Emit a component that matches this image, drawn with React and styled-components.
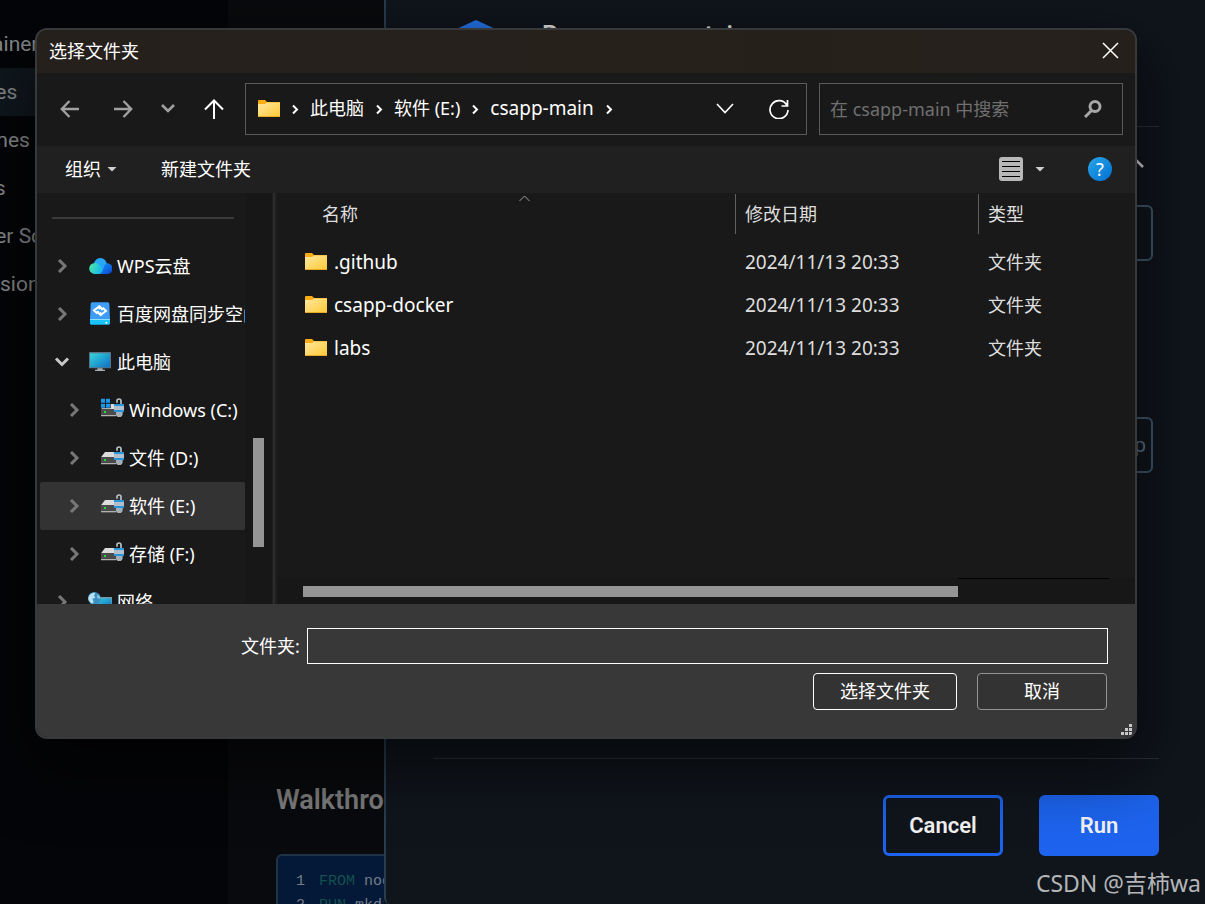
import React from 'react';
import styled, { createGlobalStyle, css } from 'styled-components';

const GlobalStyle = createGlobalStyle`
    *{
        box-sizing: border-box;
    }
    body{
        margin: 0;
        background-color: #0f141b;
        color: #fff;
        font-family: "Noto Sans", "Noto Sans CJK SC", sans-serif;
        font-size: 18px;
        line-height: 24px;
    }
    button, input{
        font: inherit;
        color: inherit;
    }
    button{
        padding: 0;
        border: 0;
        background: none;
        cursor: pointer;
    }
    svg{
        display: block;
        flex-shrink: 0;
    }
`;

/* ---------- page behind the dialog ---------- */
const Page = styled.div`
    position: relative;
    display: flex;
    height: 100vh;
    overflow: hidden;
    font-family: Roboto, "Noto Sans CJK SC", sans-serif;
`;

const Sidebar = styled.nav`
    width: 228px;
    flex-shrink: 0;
    padding-top: 20px;
    background-color: #040508;
`;

const SideLink = styled.a`
    display: flex;
    align-items: center;
    height: 48px;
    color: #8a8d90;
    font-size: 21px;
    text-decoration: none;
    background-color: ${props => (props.$active ? '#10181e' : 'transparent')};
    span{
        margin-left: -52px;
        white-space: nowrap;
    }
`;

const Main = styled.main`
    width: 156px;
    flex-shrink: 0;
    display: flex;
    flex-direction: column;
    overflow: hidden;
    white-space: nowrap;
    background-color: #090a0d;
    padding: 780px 0 0 48px;
    h2{
        margin: 0 0 34px;
        color: #7c7c7c;
        font-size: 27px;
        line-height: 40px;
        font-weight: 600;
    }
`;

const CodeBlock = styled.pre`
    width: 400px;
    margin: 0;
    padding: 14px 18px;
    border: 2px solid #1e3344;
    border-radius: 6px;
    background-color: #041838;
    color: #757e89;
    font-family: "Liberation Mono", monospace;
    font-size: 15px;
    line-height: 24px;
    i{
        margin-right: 14px;
        font-style: normal;
    }
    b{
        font-weight: 400;
        color: #14524d;
    }
`;

const Drawer = styled.section`
    flex: 1;
    display: flex;
    flex-direction: column;
    border-left: 2px solid #283d50;
    border-bottom-left-radius: 6px;
    background-color: #10151c;
    padding: 0 46px 0 47px;
`;

const DrawerHead = styled.header`
    display: flex;
    align-items: flex-start;
    height: 127px;
    padding: 20px 19px 0;
    border-bottom: 1px solid #2c3136;
    h1{
        margin: 0 0 0 42px;
        color: #e0e0e0;
        font-size: 25px;
        line-height: 32px;
        font-weight: 500;
    }
`;

const DrawerBody = styled.div`
    flex: 1;
    display: flex;
    flex-direction: column;
    padding-right: 6px;
    svg{
        align-self: flex-end;
        margin: 27px 8px 31px 0;
    }
    input{
        width: 100%;
        height: 56px;
        padding: 0 5px;
        border: 2px solid #3f586e;
        border-radius: 6px;
        background: none;
        color: #587690;
        font-size: 21px;
        text-align: right;
    }
    input + input{
        margin-top: 156px;
    }
`;

const DrawerFoot = styled.footer`
    display: flex;
    justify-content: flex-end;
    gap: 36px;
    padding: 36px 0 48px;
    border-top: 1px solid #2c3136;
`;

const BigButton = styled.button`
    width: 120px;
    height: 61px;
    border: 3px solid #1d63ed;
    border-radius: 6px;
    background-color: ${props => (props.$primary ? '#1d63ed' : 'transparent')};
    color: #f2f2f2;
    font-size: 22px;
    font-weight: 600;
`;

const Watermark = styled.div`
    position: absolute;
    right: 4px;
    bottom: 5px;
    z-index: 3;
    color: #b4b6b8;
    font-family: "Noto Sans", "Noto Sans CJK SC", sans-serif;
    font-size: 23px;
    line-height: 32px;
`;

/* ---------- folder dialog ---------- */
const Overlay = styled.div`
    position: absolute;
    inset: 0;
    z-index: 2;
    padding: 28px 68px 0 35px;
    font-family: "Noto Sans", "Noto Sans CJK SC", sans-serif;
    pointer-events: none;
`;

const Dialog = styled.div`
    display: flex;
    flex-direction: column;
    overflow: hidden;
    border: 2px solid #38393b;
    border-radius: 12px;
    background-color: #191919;
    box-shadow: 0 24px 64px 8px rgba(0, 0, 0, 0.55);
    pointer-events: auto;
`;

const TitleBar = styled.div`
    display: flex;
    align-items: center;
    justify-content: space-between;
    height: 43px;
    padding: 0 16px 2px 12px;
    background: linear-gradient(90deg, #26201c, #25211a 70%, #26201c);
`;

const NavBar = styled.div`
    display: flex;
    align-items: center;
    height: 73px;
    padding: 0 12px 2px 6px;
`;

const NavButton = styled.button`
    display: flex;
    align-items: center;
    justify-content: center;
    width: ${props => props.$width || 53}px;
    height: 40px;
    flex-shrink: 0;
    color: ${props => (props.$bright ? '#fff' : '#a0a0a0')};
`;

const boxed = css`
    display: flex;
    align-items: center;
    min-width: 0;
    height: 52px;
    border: 1px solid #5a5a5a;
`;

const AddressBar = styled.div`
    ${boxed}
    flex: 1;
    margin: 0 12px 0 4px;
    padding: 0 7px 0 12px;
    white-space: nowrap;
`;

const Crumb = styled.button`
    padding-bottom: 2px;
    font-size: ${props => (props.$latin ? 19 : 18)}px;
`;

const Spacer = styled.div`
    flex: ${props => (props.$width ? `0 0 ${props.$width}px` : '1')};
`;

const SearchBox = styled.label`
    ${boxed}
    flex: 0 1 304px;
    padding: 0 20px 0 10px;
    input{
        flex: 1;
        min-width: 0;
        padding: 0;
        border: 0;
        outline: 0;
        background: none;
    }
    input::placeholder{
        color: #707070;
        opacity: 1;
    }
`;

const Toolbar = styled.div`
    display: flex;
    align-items: center;
    height: 47px;
    padding: 0 23px 2px 28px;
    background-color: #202020;
`;

const ToolButton = styled.button`
    display: flex;
    align-items: center;
    gap: ${props => props.$gap || 6}px;
    margin-right: ${props => props.$after || 0}px;
`;

const HelpButton = styled.button`
    width: 24px;
    height: 24px;
    border-radius: 50%;
    background: linear-gradient(135deg, #29a5e8, #0070d0);
`;

const Body = styled.div`
    display: flex;
    height: 411px;
`;

const Tree = styled.div`
    width: 208px;
    flex-shrink: 0;
    overflow: hidden;
    padding-left: 3px;
    hr{
        height: 2px;
        margin: 24px 11px 23px 12px;
        border: 0;
        background-color: #3a3a3a;
    }
`;

const TreeRow = styled.div`
    display: flex;
    align-items: center;
    height: 48px;
    padding-left: ${props => (props.$nested ? 26 : 14)}px;
    border-radius: 2px;
    white-space: nowrap;
    overflow: hidden;
    background-color: ${props => (props.$selected ? '#333' : 'transparent')};
    .toggle{
        width: 16px;
        margin-right: 18px;
        color: ${props => (props.$open ? '#c8c8c8' : '#777')};
    }
    .icon{
        display: flex;
        justify-content: center;
        width: 24px;
        margin-right: 5px;
        padding-bottom: ${props => (props.$nested ? 5 : 1)}px;
        flex-shrink: 0;
    }
`;

const TreeScroll = styled.div`
    width: 27px;
    flex-shrink: 0;
    padding: 245px 8px 0;
    background-color: #171717;
    div{
        height: 109px;
        background-color: #959595;
    }
`;

const Splitter = styled.div`
    width: 5px;
    flex-shrink: 0;
    border: solid #1f1f1f;
    border-width: 0 2px 0 1px;
    background-color: #2c2c2c;
`;

const Files = styled.div`
    position: relative;
    flex: 1;
    display: flex;
    flex-direction: column;
    justify-content: space-between;
`;

const SortMark = styled.svg`
    position: absolute;
    top: 2px;
    left: 242px;
`;

const FileTable = styled.table`
    width: 100%;
    table-layout: fixed;
    border-collapse: collapse;
    th, td{
        padding: 0;
        text-align: left;
        font-weight: 400;
        color: #dedede;
    }
    th{
        height: 47px;
        vertical-align: top;
        padding-top: 1px;
    }
    th div{
        height: 40px;
        padding-left: 9px;
        border-left: 1px solid #606060;
        line-height: 40px;
    }
    th:first-child div{
        padding-left: 44px;
        border-left-color: transparent;
    }
    td{
        height: 43px;
        padding-left: 10px;
    }
    .date{
        font-size: 19px;
    }
    td:first-child{
        padding-left: 28px;
    }
`;

const FileName = styled.div`
    display: flex;
    align-items: center;
    gap: 7px;
    color: #fff;
    font-size: 19px;
`;

const ListScroll = styled.div`
    display: flex;
    height: 26px;
    padding: 0 26px;
    background-color: #171717;
    .thumb{
        flex: 655;
        height: 11px;
        margin-top: 8px;
        background-color: #959595;
    }
    .track{
        flex: 151;
        border-top: 1px solid #000;
    }
`;

const Footer = styled.div`
    position: relative;
    display: flex;
    flex-direction: column;
    gap: 9px;
    padding: 24px 27px 27px 204px;
    background-color: #383838;
`;

const FolderField = styled.label`
    display: flex;
    align-items: center;
    gap: 7px;
    white-space: nowrap;
    input{
        flex: 1;
        min-width: 0;
        height: 36px;
        padding: 0 8px;
        border: 1px solid #fff;
        outline: 0;
        background: none;
    }
`;

const Actions = styled.div`
    display: flex;
    justify-content: flex-end;
    gap: 20px;
    padding-right: 1px;
`;

const ActionButton = styled.button`
    width: ${props => (props.$main ? 144 : 130)}px;
    height: 37px;
    padding-bottom: 2px;
    border: 1px solid ${props => (props.$main ? '#fff' : '#959595')};
    border-radius: 4px;
    background-color: #333;
`;

const Grip = styled.svg`
    position: absolute;
    right: 3px;
    bottom: 2px;
`;

/* ---------- icons ---------- */
const Stroke = ({ w, h, d, sw = 2, ...rest }) => (
    <svg width={w} height={h} viewBox={`0 0 ${w} ${h}`} fill="none" stroke="currentColor" strokeWidth={sw} {...rest}>
        <path d={d} />
    </svg>
);

const CrumbArrow = () => <Stroke w={30} h={12} sw={2} d="M13 2.500l4 4-4 4" />;

const Caret = () => (
    <svg width="10" height="6" viewBox="0 0 10 6">
        <path d="M0.500 1h9L5 5.500z" fill="#d0d0d0" />
    </svg>
);

const FolderIcon = () => (
    <svg width="22" height="17" viewBox="0 0 22 17">
        <defs>
            <linearGradient id="folder" x1="0" y1="0" x2="1" y2="1">
                <stop offset="0" stopColor="#ffe8a0" />
                <stop offset="1" stopColor="#ffc934" />
            </linearGradient>
        </defs>
        <path d="M0 1a1 1 0 011-1h6l2 2h13v5H0z" fill="#f9ad13" />
        <path d="M0 4h7l2-1.500h13V16a1 1 0 01-1 1H1a1 1 0 01-1-1z" fill="url(#folder)" />
        <path d="M0 16h22a1 1 0 01-1 1H1a1 1 0 01-1-1z" fill="#e9ab25" />
    </svg>
);

const CloudIcon = () => (
    <svg width="23" height="16" viewBox="0 0 69 49">
        <defs>
            <linearGradient id="cloudLeft" x1="0" y1="0.300" x2="1" y2="0.700">
                <stop offset="0" stopColor="#4be8a4" />
                <stop offset="1" stopColor="#12b4f6" />
            </linearGradient>
            <linearGradient id="cloudRight" x1="0" y1="0" x2="1" y2="1">
                <stop offset="0" stopColor="#1a9bfa" />
                <stop offset="1" stopColor="#0843cf" />
            </linearGradient>
        </defs>
        <circle cx="34" cy="20" r="20" fill="#27a8fb" />
        <path d="M30 49c16-2 10-33 26-33a16 16 0 01-2 33z" fill="url(#cloudRight)" />
        <path d="M17 49a17 17 0 110-34c12 0 15 8 23 17 3 10-4 17-12 17z" fill="url(#cloudLeft)" />
    </svg>
);

const SyncDiskIcon = () => (
    <svg width="20" height="23" viewBox="0 0 60 69">
        <path d="M7 1h46q5 0 5 5l2 48H0L2 6q0-5 5-5z" fill="#3d9df8" />
        <path d="M0 51h60v13q0 4-4 4H4q-4 0-4-4z" fill="#18c4fb" />
        <path d="M0 51h60v3H0z" fill="#8be0ff" />
        <circle cx="49" cy="62" r="3" fill="#fff" />
        <g fill="none" stroke="#fff" strokeWidth="6">
            <path d="M26 28l-6 5-8-8 16-12 10 9M23 13l8 8" />
            <path d="M34 24l6-5 8 8-16 12-10-9M37 39l-8-8" />
        </g>
    </svg>
);

const ComputerIcon = () => (
    <svg width="22" height="19" viewBox="0 0 66 57">
        <defs>
            <linearGradient id="screen" x1="0" y1="0" x2="1" y2="1">
                <stop offset="0" stopColor="#35d5dc" />
                <stop offset="1" stopColor="#0f6fc4" />
            </linearGradient>
        </defs>
        <rect width="66" height="49" rx="2" fill="#5d7180" />
        <rect x="3" y="4" width="60" height="42" fill="url(#screen)" />
        <path d="M25 49h16v4h7v4H18v-4h7z" fill="#a9adb0" />
    </svg>
);

const DriveIcon = ({ windows }) => (
    <svg width="23" height="19" viewBox="0 0 69 57">
        <path d="M0 34l12-16h34v16z" fill="#dcdcdc" />
        <path d="M0 33h48v20H0z" fill="#4b4b4b" />
        <path d="M0 51h46v4H0z" fill="#b0b0b0" />
        <rect x="9" y="39" width="6" height="6" fill="#26e02a" />
        {windows && (
            <>
                <path d="M0 0h29v31H0z" fill="#191919" />
                <path d="M0 2h12v12H0zM15 2h12v12H15zM0 17h12v12H0zM15 17h12v12H15z" fill="#1a97e6" />
            </>
        )}
        <path d="M48 14V9q0-6 6-6t6 6v10" fill="none" stroke="#b9c2c9" strokeWidth="5" />
        <path d="M45 40h20v10l-5 7H50l-5-7z" fill="#a4afb8" />
        <rect x="39" y="18" width="30" height="24" fill="#2795dd" />
        <rect x="39" y="24" width="30" height="12" fill="#b3bfca" />
    </svg>
);

const NetworkIcon = () => (
    <svg width="24" height="20" viewBox="0 0 72 60">
        <path d="M8 15h64v36H8z" fill="#7f98a5" />
        <path d="M10 19h60v30H10z" fill="url(#screen)" />
        <path d="M30 51h20v7H30z" fill="#a9adb0" />
        <circle cx="19" cy="19" r="19" fill="#3d8fc0" />
        <path d="M4 10Q12 0 22 3l-4 8 4 6-9 3 4 9-4 6Q0 28 1 18z" fill="#b9e2f2" />
        <path d="M27 8l8 4 1 9-8-3z" fill="#8ecbe6" />
    </svg>
);

const HexLogo = () => (
    <svg width="48" height="54" viewBox="0 0 48 54" overflow="visible">
        <path d="M24 0l26 12v29L24 54-2 41V12z" fill="#2272e6" />
    </svg>
);

/* ---------- data ---------- */
const sideLinks = ['Containers', 'Images', 'Volumes', 'Builds', 'Docker Scout', 'Extensions'];

const treeItems = [
    { label: 'WPS云盘', icon: <CloudIcon /> },
    { label: '百度网盘同步空间', icon: <SyncDiskIcon /> },
    { label: '此电脑', icon: <ComputerIcon />, open: true },
    { label: 'Windows (C:)', icon: <DriveIcon windows />, nested: true },
    { label: '文件 (D:)', icon: <DriveIcon />, nested: true },
    { label: '软件 (E:)', icon: <DriveIcon />, nested: true, selected: true },
    { label: '存储 (F:)', icon: <DriveIcon />, nested: true },
    { label: '网络', icon: <NetworkIcon /> },
];

const files = ['.github', 'csapp-docker', 'labs'];

const FolderDialog = () => {
    return (
        <Dialog role="dialog" aria-label="选择文件夹">
            <TitleBar>
                <span>选择文件夹</span>
                <button aria-label="关闭">
                    <Stroke w={17} h={17} sw={1.5} d="M1 1l15 15M16 1L1 16" />
                </button>
            </TitleBar>
            <NavBar>
                <NavButton aria-label="后退">
                    <Stroke w={20} h={18} sw={2.4} d="M19 9H2M9.500 1L1.800 9l7.700 8" />
                </NavButton>
                <NavButton aria-label="前进">
                    <Stroke w={20} h={18} sw={2.4} d="M1 9h17M10.500 1l7.700 8-7.700 8" />
                </NavButton>
                <NavButton $width={38} aria-label="最近位置">
                    <Stroke w={14} h={9} sw={2.6} d="M1 1l6 6 6-6" />
                </NavButton>
                <NavButton $width={54} $bright aria-label="向上">
                    <Stroke w={20} h={20} d="M10 20V2M1 10.500l9-9 9 9" />
                </NavButton>
                <AddressBar>
                    <FolderIcon />
                    <CrumbArrow />
                    <Crumb>此电脑</Crumb>
                    <CrumbArrow />
                    <Crumb>软件 (E:)</Crumb>
                    <CrumbArrow />
                    <Crumb $latin>csapp-main</Crumb>
                    <CrumbArrow />
                    <Spacer />
                    <NavButton $width={40} $bright aria-label="展开">
                        <Stroke w={18} h={11} sw={1.6} d="M1 1l8 8.500L17 1" />
                    </NavButton>
                    <Spacer $width={14} />
                    <NavButton $width={40} $bright aria-label="刷新">
                        <Stroke w={20} h={20} sw={1.7} d="M18 6.500A9 9 0 1019 11M18.500 1v6h-6" />
                    </NavButton>
                </AddressBar>
                <SearchBox>
                    <input type="text" aria-label="搜索" placeholder="在 csapp-main 中搜索" />
                    <svg width="18" height="18" viewBox="0 0 18 18" fill="none" stroke="#a6a6a6" strokeWidth="3">
                        <circle cx="11" cy="6.500" r="5" />
                        <path d="M8 10l-7 7" />
                    </svg>
                </SearchBox>
            </NavBar>
            <Toolbar>
                <ToolButton $after={44}>
                    组织
                    <Caret />
                </ToolButton>
                <ToolButton>新建文件夹</ToolButton>
                <Spacer />
                <ToolButton $gap={12} $after={43} aria-label="更改视图">
                    <svg width="24" height="24" viewBox="0 0 24 24">
                        <rect width="24" height="24" rx="3" fill="#b8b8b8" />
                        <path d="M3 4.500h18M3 9.500h18M3 14.500h18M3 19.500h18" stroke="#000" />
                    </svg>
                    <Caret />
                </ToolButton>
                <HelpButton aria-label="帮助">?</HelpButton>
            </Toolbar>
            <Body>
                <Tree>
                    <hr />
                    {treeItems.map((item) => (
                        <TreeRow key={item.label} $nested={item.nested} $selected={item.selected} $open={item.open}>
                            {item.open
                                ? <Stroke className="toggle" w={16} h={10} sw={3} d="M2 1.500l6 6 6-6" />
                                : <Stroke className="toggle" w={16} h={14} sw={3} d="M5 1l6 6-6 6" />}
                            <span className="icon">{item.icon}</span>
                            <span>{item.label}</span>
                        </TreeRow>
                    ))}
                </Tree>
                <TreeScroll><div /></TreeScroll>
                <Splitter />
                <Files>
                    <SortMark width="11" height="7" viewBox="0 0 11 7" fill="none" stroke="#a0a0a0">
                        <path d="M0.500 6l5-5 5 5" />
                    </SortMark>
                    <FileTable>
                        <colgroup>
                            <col />
                            <col style={{ width: 243 }} />
                            <col style={{ width: 157 }} />
                        </colgroup>
                        <thead>
                            <tr>
                                <th><div>名称</div></th>
                                <th><div>修改日期</div></th>
                                <th><div>类型</div></th>
                            </tr>
                        </thead>
                        <tbody>
                            {files.map((name) => (
                                <tr key={name}>
                                    <td><FileName><FolderIcon />{name}</FileName></td>
                                    <td className="date">2024/11/13 20:33</td>
                                    <td>文件夹</td>
                                </tr>
                            ))}
                        </tbody>
                    </FileTable>
                    <ListScroll>
                        <div className="thumb" />
                        <div className="track" />
                    </ListScroll>
                </Files>
            </Body>
            <Footer>
                <FolderField>
                    文件夹:
                    <input type="text" />
                </FolderField>
                <Actions>
                    <ActionButton $main>选择文件夹</ActionButton>
                    <ActionButton>取消</ActionButton>
                </Actions>
                <Grip width="11" height="11" viewBox="0 0 11 11" fill="#c8c8c8">
                    <path d="M8 0h3v3H8zM4 4h3v3H4zM8 4h3v3H8zM0 8h3v3H0zM4 8h3v3H4zM8 8h3v3H8z" />
                </Grip>
            </Footer>
        </Dialog>
    );
};

const App = () => {
    return (
        <>
            <GlobalStyle />
            <Page>
                <Sidebar>
                    {sideLinks.map((label) => (
                        <SideLink key={label} href="#" $active={label === 'Images'}>
                            <span>{label}</span>
                        </SideLink>
                    ))}
                </Sidebar>
                <Main>
                    <h2>Walkthroughs</h2>
                    <CodeBlock>
                        <i>1</i><b>FROM</b> node{'\n'}<i>2</i><b>RUN</b> mkdir -p
                    </CodeBlock>
                </Main>
                <Drawer>
                    <DrawerHead>
                        <HexLogo />
                        <h1>Run a new container</h1>
                    </DrawerHead>
                    <DrawerBody>
                        <Stroke w={20} h={20} sw={2.6} color="#d8d8d8" d="M2 13l8-8 8 8" />
                        <input type="text" aria-label="Container name" />
                        <input type="text" aria-label="Host path" defaultValue="csapp" />
                    </DrawerBody>
                    <DrawerFoot>
                        <BigButton>Cancel</BigButton>
                        <BigButton $primary>Run</BigButton>
                    </DrawerFoot>
                </Drawer>
                <Overlay>
                    <FolderDialog />
                </Overlay>
                <Watermark>CSDN @吉柿wa</Watermark>
            </Page>
        </>
    );
};

export default App;
